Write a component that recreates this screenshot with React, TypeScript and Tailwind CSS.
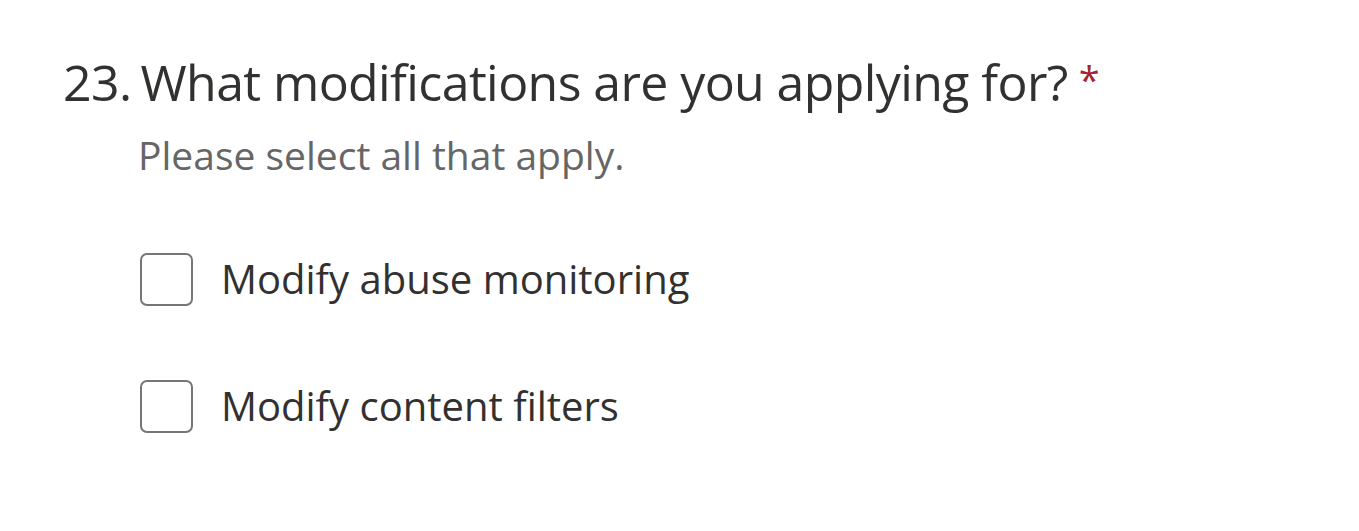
export default function App() {
  const options = ["Modify abuse monitoring", "Modify content filters"];

  return (
    <div className="min-h-screen bg-white pl-[63px] pt-[52px] font-['Open_Sans',sans-serif]">
      {/* Question title */}
      <div className="flex items-baseline text-[50px] leading-[60px] text-[#323130]">
        <span className="mr-[9px] tracking-[-0.6px]">23.</span>
        <span className="tracking-[-0.6px]">What modifications are you applying for?</span>
        <span className="ml-[11px] self-start pt-[2px] text-[38px] leading-[50px] text-[#a4262c]">*</span>
      </div>

      {/* Subtitle */}
      <div className="ml-[75px] mt-[19px] text-[39px] leading-[48px] text-[#666666]">
        Please select all that apply.
      </div>

      {/* Options */}
      <div className="ml-[77px] mt-[73px] flex flex-col gap-[73px]">
        {options.map((label) => (
          <label key={label} className="flex items-center gap-[28px]">
            <span className="h-[53px] w-[53px] shrink-0 rounded-[7px] border-2 border-[#767676] bg-white" />
            <span className="text-[40px] leading-[54px] text-[#323130]">{label}</span>
          </label>
        ))}
      </div>
    </div>
  );
}
